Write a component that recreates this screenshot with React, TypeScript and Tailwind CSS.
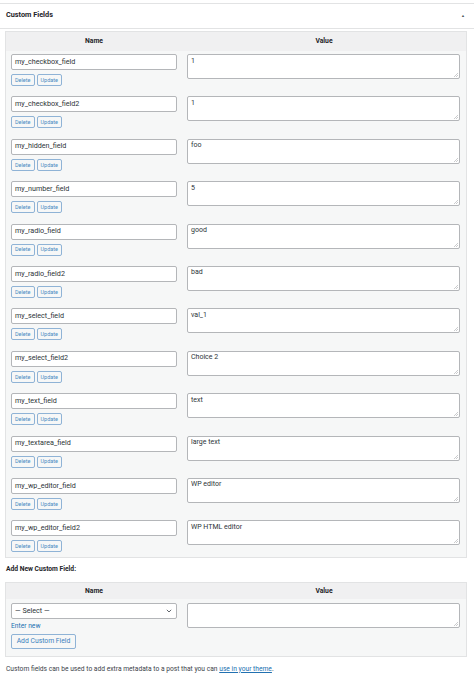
import React from "react";

interface Field {
  name: string;
  value: string;
}

const fields: Field[] = [
  { name: "my_checkbox_field", value: "1" },
  { name: "my_checkbox_field2", value: "1" },
  { name: "my_hidden_field", value: "foo" },
  { name: "my_number_field", value: "5" },
  { name: "my_radio_field", value: "good" },
  { name: "my_radio_field2", value: "bad" },
  { name: "my_select_field", value: "val_1" },
  { name: "my_select_field2", value: "Choice 2" },
  { name: "my_text_field", value: "text" },
  { name: "my_textarea_field", value: "large text" },
  { name: "my_wp_editor_field", value: "WP editor" },
  { name: "my_wp_editor_field2", value: "WP HTML editor" },
];

function Grip() {
  return (
    <svg className="absolute right-[1px] bottom-[1px]" width="4" height="4" viewBox="0 0 4 4">
      <path d="M4 0 L0 4 M4 2 L2 4" stroke="#a7aaad" strokeWidth="0.6" />
    </svg>
  );
}

function ValueBox({ value }: { value: string }) {
  return (
    <div className="relative ml-[5px] h-[25px] w-[273px] rounded-[2px] border border-[#b4b6b9] bg-white px-[3px] pt-[1.5px] text-[7px] leading-[9px] text-[#2c3338]">
      {value}
      <Grip />
    </div>
  );
}

function SmallButton({ label }: { label: string }) {
  return (
    <div className="flex h-[12px] items-center rounded-[2px] border border-[#8fb3d6] bg-[#f6f7f7] px-[3px] text-[5.5px] text-[#4a8bc2]">
      {label}
    </div>
  );
}

function HeadRow({ tall }: { tall?: boolean }) {
  return (
    <div
      className={
        "flex items-center bg-[#f0f0f1] text-[6.8px] font-bold text-[#1d2327] " +
        (tall ? "h-[19px]" : "h-[16.5px]")
      }
    >
      <div className="w-[176px] text-center">Name</div>
      <div className="flex-1 text-center">Value</div>
    </div>
  );
}

export default function App() {
  return (
    <div className="h-[678px] w-[474px] overflow-hidden bg-white" style={{ fontFamily: "Roboto, 'Liberation Sans', sans-serif" }}>
      <div className="h-[2.5px]" />
      <div className="flex h-[26px] items-center justify-between border-y border-[#e2e3e4] px-[6px]">
        <span className="text-[7.3px] font-bold text-[#1d2327]">Custom Fields</span>
        <span className="mr-[3px] text-[4px] text-[#50575e]">▲</span>
      </div>

      <div className="ml-[5px] mt-[2.5px] w-[462px] border border-[#e2e3e4] bg-[#f6f7f7]">
        <HeadRow tall />
        {fields.map((f, i) => (
          <div
            key={f.name}
            className={"flex pt-[3px] " + (i === fields.length - 1 ? "h-[40px]" : "h-[42.4px]")}
          >
            <div className="w-[176px] pl-[5px]">
              <div className="flex h-[16px] w-[166px] items-center rounded-[2px] border border-[#b4b6b9] bg-white px-[3px] text-[7.2px] text-[#2c3338]">
                {f.name}
              </div>
              <div className="mt-[4px] flex gap-[2px]">
                <SmallButton label="Delete" />
                <SmallButton label="Update" />
              </div>
            </div>
            <div className="flex-1">
              <ValueBox value={f.value} />
            </div>
          </div>
        ))}
      </div>

      <div className="ml-[6px] mt-[6px] h-[10px] text-[6.7px] leading-[10px] font-bold text-[#1d2327]">
        Add New Custom Field:
      </div>

      <div className="ml-[5px] mt-[7.5px] h-[75px] w-[462px] border border-[#e2e3e4] bg-[#f6f7f7]">
        <HeadRow />
        <div className="flex pt-[4px]">
          <div className="w-[176px] pl-[5px]">
            <div className="flex h-[16px] w-[166px] items-center justify-between rounded-[2px] border border-[#b4b6b9] bg-white px-[3px] text-[7.2px] text-[#2c3338]">
              <span>— Select —</span>
              <svg width="6" height="4" viewBox="0 0 6 4" className="mr-[1px]">
                <path d="M0.8 0.8 L3 3 L5.2 0.8" fill="none" stroke="#50575e" strokeWidth="0.9" />
              </svg>
            </div>
            <div className="mt-[1.5px] text-[6.7px] text-[#2271b1]">Enter new</div>
            <div className="mt-[3px] flex h-[15px] w-[65px] items-center justify-center rounded-[2px] border border-[#8fb3d6] bg-[#f6f7f7] text-[6.8px] text-[#3a80bd]">
              Add Custom Field
            </div>
          </div>
          <div className="flex-1">
            <ValueBox value="" />
          </div>
        </div>
      </div>

      <div className="ml-[6px] mt-[7px] text-[6.7px] leading-[10px] text-[#3c434a]">
        Custom fields can be used to add extra metadata to a post that you can{" "}
        <span className="text-[#2271b1] underline">use in your theme</span>.
      </div>
    </div>
  );
}
